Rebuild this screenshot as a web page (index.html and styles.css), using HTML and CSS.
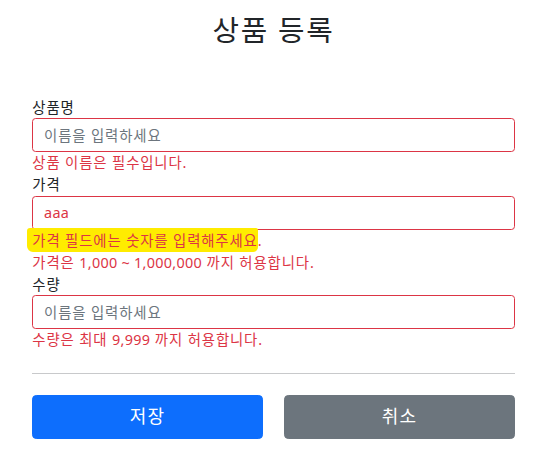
FILE: index.html
```html
<!DOCTYPE html>
<html lang="ko">
<head>
<meta charset="utf-8">
<title>상품 등록</title>
<link rel="stylesheet" href="styles.css">
</head>
<body>
<div class="container">
  <div class="header">
    <h2 class="title">상품 등록</h2>
  </div>
  <form class="form" action="#" onsubmit="return false;">
    <div class="field">
      <label class="label" for="itemName">상품명</label>
      <input type="text" id="itemName" class="form-control field-error" placeholder="이름을 입력하세요">
      <div class="error">상품 이름은 필수입니다.</div>
    </div>
    <div class="field">
      <label class="label" for="price">가격</label>
      <input type="text" id="price" class="form-control field-error latin-input" value="aaa" placeholder="가격을 입력하세요">
      <div class="error"><span class="marker">가격 필드에는 숫자를 입력해주세요</span>.</div>
      <div class="error">가격은 <span class="num">1,000 ~ 1,000,000</span> 까지 허용합니다.</div>
    </div>
    <div class="field">
      <label class="label" for="quantity">수량</label>
      <input type="text" id="quantity" class="form-control field-error" placeholder="이름을 입력하세요">
      <div class="error">수량은 최대 <span class="num">9,999</span> 까지 허용합니다.</div>
    </div>
    <hr class="divider">
    <div class="actions">
      <button type="submit" class="btn btn-primary">저장</button>
      <button type="button" class="btn btn-secondary">취소</button>
    </div>
  </form>
</div>
</body>
</html>
```

FILE: styles.css
```css
* {
  box-sizing: border-box;
}

body {
  margin: 0;
  font-family: "Noto Sans", "Noto Sans CJK KR", sans-serif;
  font-size: 14.4px;
  line-height: 21.8px;
  letter-spacing: 0.06em;
  color: #212529;
  background: #ffffff;
}

.container {
  max-width: 504px;
  margin: 0 auto;
  padding: 0 10.8px;
}

.header {
  padding: 13px 0 41.8px;
  text-align: center;
}

.title {
  margin: 0 0 7.2px;
  font-size: 28.8px;
  line-height: 1.2;
  font-weight: 400;
  letter-spacing: 0.06em;
}

.form {
  display: flex;
  flex-direction: column;
}

.label {
  display: block;
}

.num {
  letter-spacing: 0.02em;
}

.form-control {
  display: block;
  width: 100%;
  height: 34px;
  padding: 5.4px 10.8px;
  font-family: inherit;
  font-size: 14.4px;
  line-height: 21.6px;
  letter-spacing: 0.06em;
  color: #212529;
  background: #ffffff;
  border: 1px solid #ced4da;
  border-radius: 3.6px;
  outline: none;
}

.form-control.latin-input {
  letter-spacing: 0.02em;
}

.form-control::placeholder {
  color: #6c757d;
  opacity: 1;
}

.field-error {
  border-color: #dc3545;
  color: #dc3545;
}

.error {
  color: #dc3545;
}

.marker {
  margin-left: -5px;
  padding: 3px 0 2px 5px;
  background: #ffec00;
  border-radius: 3px 2px 5px 6px;
}

.divider {
  margin: 21.6px 0;
  border: 0;
  border-top: 1px solid #c8c9cb;
}

.actions {
  display: grid;
  grid-template-columns: 1fr 1fr;
  column-gap: 21.6px;
}

.btn {
  display: block;
  width: 100%;
  padding: 7.2px 14.4px;
  font-family: inherit;
  font-size: 18px;
  line-height: 27px;
  font-weight: 400;
  letter-spacing: 0.06em;
  color: #ffffff;
  border: 1px solid transparent;
  border-radius: 4.3px;
  cursor: pointer;
}

.btn-primary {
  background: #0d6efd;
  border-color: #0d6efd;
}

.btn-secondary {
  background: #6c757d;
  border-color: #6c757d;
}
```
